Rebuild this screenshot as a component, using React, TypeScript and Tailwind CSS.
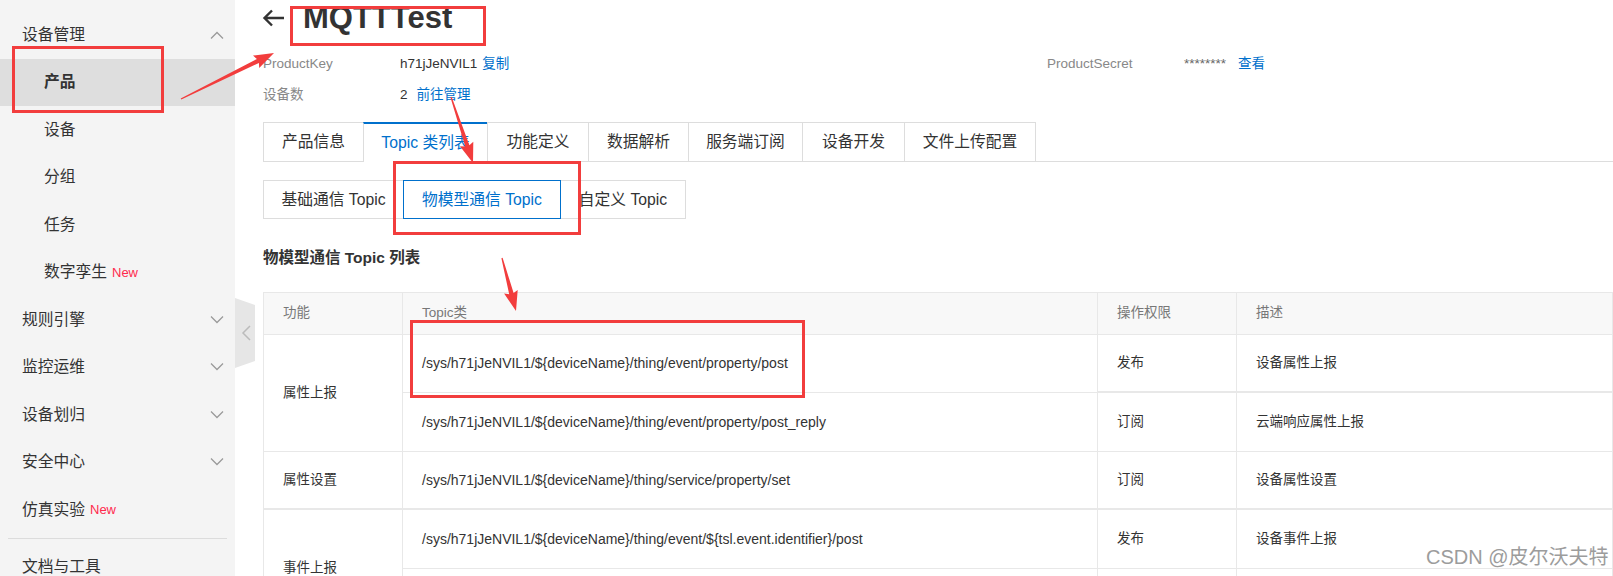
import React from "react";

type MenuItem = {
  label: string;
  sub?: boolean;
  active?: boolean;
  chevron?: "up" | "down";
  isNew?: boolean;
};

const menu: MenuItem[] = [
  { label: "设备管理", chevron: "up" },
  { label: "产品", sub: true, active: true },
  { label: "设备", sub: true },
  { label: "分组", sub: true },
  { label: "任务", sub: true },
  { label: "数字孪生", sub: true, isNew: true },
  { label: "规则引擎", chevron: "down" },
  { label: "监控运维", chevron: "down" },
  { label: "设备划归", chevron: "down" },
  { label: "安全中心", chevron: "down" },
  { label: "仿真实验", isNew: true },
];

const tabs = [
  { label: "产品信息", w: "w-[100px]" },
  { label: "Topic 类列表", w: "w-[124px]", active: true },
  { label: "功能定义", w: "w-[101px]" },
  { label: "数据解析", w: "w-[100px]" },
  { label: "服务端订阅", w: "w-[114px]" },
  { label: "设备开发", w: "w-[102px]" },
  { label: "文件上传配置", w: "w-[132px]" },
];

const prefix = "/sys/h71jJeNVIL1/${deviceName}/thing/";

// red annotation arrows: tail -> tip
const arrows = [
  [181, 99, 274, 53],
  [451, 97, 473, 163],
  [502, 258, 516, 311],
];

function arrowPoints(x1: number, y1: number, x2: number, y2: number) {
  const head = 18;
  const wing = 7;
  const w0 = 1.2;
  const w1 = 4.5;
  const len = Math.hypot(x2 - x1, y2 - y1);
  const ux = (x2 - x1) / len;
  const uy = (y2 - y1) / len;
  const nx = -uy;
  const ny = ux;
  const bx = x2 - ux * head;
  const by = y2 - uy * head;
  const p = (x: number, y: number) => `${x.toFixed(1)},${y.toFixed(1)}`;
  return [
    p(x1 + (nx * w0) / 2, y1 + (ny * w0) / 2),
    p(bx + (nx * w1) / 2, by + (ny * w1) / 2),
    p(bx - ux * 2 + nx * wing, by - uy * 2 + ny * wing),
    p(x2, y2),
    p(bx - ux * 2 - nx * wing, by - uy * 2 - ny * wing),
    p(bx - (nx * w1) / 2, by - (ny * w1) / 2),
    p(x1 - (nx * w0) / 2, y1 - (ny * w0) / 2),
  ].join(" ");
}

function Chevron({ dir }: { dir: "up" | "down" }) {
  return (
    <svg width="14" height="8" viewBox="0 0 14 8">
      <path
        d={dir === "up" ? "M1 7.5L7 1.5L13 7.5" : "M1 0.5L7 6.5L13 0.5"}
        fill="none"
        stroke="#9a9a9a"
        strokeWidth="1.3"
      />
    </svg>
  );
}

function Cell({ children, className = "" }: { children?: React.ReactNode; className?: string }) {
  return (
    <div className={`flex items-center border-r border-[#e8e8e8] pl-[19px] ${className}`}>
      {children}
    </div>
  );
}

export default function App() {
  return (
    <div className="relative flex h-[576px] w-[1613px] overflow-hidden bg-white font-['Liberation_Sans','Noto_Sans_CJK_SC',sans-serif] text-[#333]">
      {/* sidebar */}
      <aside className="w-[235px] shrink-0 bg-[#f4f4f4] pt-[11px] text-[15.75px] text-[#333]">
        {menu.map((m) => (
          <div
            key={m.label}
            className={`flex h-[47.5px] items-center pr-[11px] ${m.sub ? "pl-[44px]" : "pl-[22px]"} ${
              m.active ? "bg-[#dedede] font-bold" : ""
            }`}
          >
            <span>{m.label}</span>
            {m.isNew && <span className="ml-[5px] text-[13px] text-[#ff2a4d]">New</span>}
            {m.chevron && (
              <span className="ml-auto flex">
                <Chevron dir={m.chevron} />
              </span>
            )}
          </div>
        ))}
        <div className="mx-[8px] mt-[4px] h-px bg-[#dcdcdc]" />
        <div className="flex h-[56px] items-center pl-[22px]">文档与工具</div>
      </aside>

      {/* main */}
      <main className="min-w-0 flex-1 pl-[28px]">
        <div className="flex h-[36px] items-center">
          <svg width="23" height="18" viewBox="0 0 23 18" className="-ml-px">
            <path d="M22 9H2.5M10 1.5L2.5 9L10 16.5" fill="none" stroke="#333" strokeWidth="2.4" />
          </svg>
          <h1 className="ml-[18px] text-[31px] leading-[36px] font-bold text-[#333]">MQTTTest</h1>
        </div>

        <div className="mt-[13px] grid grid-cols-[137px_647px_137px_1fr] text-[13.5px]">
          <div className="flex h-[31px] items-center text-[#888]">ProductKey</div>
          <div className="flex h-[31px] items-center">
            h71jJeNVIL1<span className="ml-[5px] text-[#0070cc]">复制</span>
          </div>
          <div className="flex h-[31px] items-center text-[#888]">ProductSecret</div>
          <div className="flex h-[31px] items-center">
            <span className="text-[#666]">********</span>
            <span className="ml-[12px] text-[#0070cc]">查看</span>
          </div>
          <div className="flex h-[31px] items-center text-[#888]">设备数</div>
          <div className="flex h-[31px] items-center">
            2<span className="ml-[9px] text-[#0070cc]">前往管理</span>
          </div>
        </div>

        {/* tabs */}
        <div className="mt-[11px] flex h-[40px] text-[15.75px]">
          {tabs.map((t, i) => (
            <div
              key={t.label}
              className={`${t.w} flex items-center justify-center border-l border-[#dddddd] ${
                t.active ? "border-t-2 border-t-[#0070cc] text-[#0070cc]" : "border-t border-b"
              } ${i === tabs.length - 1 ? "border-r" : ""}`}
            >
              {t.label}
            </div>
          ))}
          <div className="flex-1 border-b border-[#dddddd]" />
        </div>

        {/* sub tabs */}
        <div className="mt-[18px] flex h-[39px] text-[15.75px]">
          <div className="flex w-[140px] items-center justify-center border-y border-l border-[#dddddd]">
            基础通信 Topic
          </div>
          <div className="flex w-[158px] items-center justify-center border border-[#0070cc] text-[#0070cc]">
            物模型通信 Topic
          </div>
          <div className="flex w-[125px] items-center justify-center border-y border-r border-[#dddddd]">
            自定义 Topic
          </div>
        </div>

        <h2 className="mt-[27px] h-[24px] text-[15.5px] leading-[24px] font-bold text-[#333]">
          物模型通信 Topic 列表
        </h2>

        {/* table */}
        <div className="mt-[22px] grid grid-cols-[139px_695px_139px_1fr] grid-rows-[42px_58px_59px_58px_59px_59px] border-t border-l border-[#e8e8e8] text-[13.5px]">
          <Cell className="border-b bg-[#f8f8f8] text-[#777]">功能</Cell>
          <Cell className="border-b bg-[#f8f8f8] text-[#777]">Topic类</Cell>
          <Cell className="border-b bg-[#f8f8f8] text-[#777]">操作权限</Cell>
          <Cell className="border-b bg-[#f8f8f8] text-[#777]">描述</Cell>

          <Cell className="row-span-2 border-b">属性上报</Cell>
          <Cell className="border-b text-[14px]">{prefix}event/property/post</Cell>
          <Cell className="border-b-2">发布</Cell>
          <Cell className="border-b-2">设备属性上报</Cell>

          <Cell className="border-b text-[14px]">{prefix}event/property/post_reply</Cell>
          <Cell className="border-b">订阅</Cell>
          <Cell className="border-b">云端响应属性上报</Cell>

          <Cell className="border-b-2">属性设置</Cell>
          <Cell className="border-b-2 text-[14px]">{prefix}service/property/set</Cell>
          <Cell className="border-b-2">订阅</Cell>
          <Cell className="border-b-2">设备属性设置</Cell>

          <Cell className="row-span-2 border-b">事件上报</Cell>
          <Cell className="border-b text-[14px]">{prefix}event/${"{tsl.event.identifier}"}/post</Cell>
          <Cell className="border-b">发布</Cell>
          <Cell className="border-b">设备事件上报</Cell>

          <Cell className="border-b" />
          <Cell className="border-b" />
          <Cell className="border-b" />
        </div>
      </main>

      {/* sidebar collapse handle */}
      <svg width="21" height="71" viewBox="0 0 21 71" className="absolute top-[298px] left-[235px]">
        <polygon points="0,0 20,7 20,63 0,70" fill="#e6e6e6" />
        <path d="M15 28L8 35L15 42" fill="none" stroke="#bbbbbb" strokeWidth="1.5" />
      </svg>

      {/* annotations */}
      <div className="pointer-events-none absolute top-[46px] left-[12px] h-[67px] w-[152px] border-[3px] border-[#f23d3d]" />
      <div className="pointer-events-none absolute top-[6px] left-[290px] h-[40px] w-[196px] border-[3px] border-[#f23d3d]" />
      <div className="pointer-events-none absolute top-[161px] left-[393px] h-[74px] w-[188px] border-[3px] border-[#f23d3d]" />
      <div className="pointer-events-none absolute top-[320px] left-[410px] h-[78px] w-[395px] border-[3px] border-[#f23d3d]" />
      <svg width="1613" height="576" className="pointer-events-none absolute top-0 left-0">
        {arrows.map((a, i) => (
          <polygon key={i} points={arrowPoints(a[0], a[1], a[2], a[3])} fill="#f23d3d" />
        ))}
      </svg>

      <div className="pointer-events-none absolute top-[544px] left-[1426px] text-[20px] leading-[26px] text-[#9c9c9c]">
        CSDN @皮尔沃夫特
      </div>
    </div>
  );
}
